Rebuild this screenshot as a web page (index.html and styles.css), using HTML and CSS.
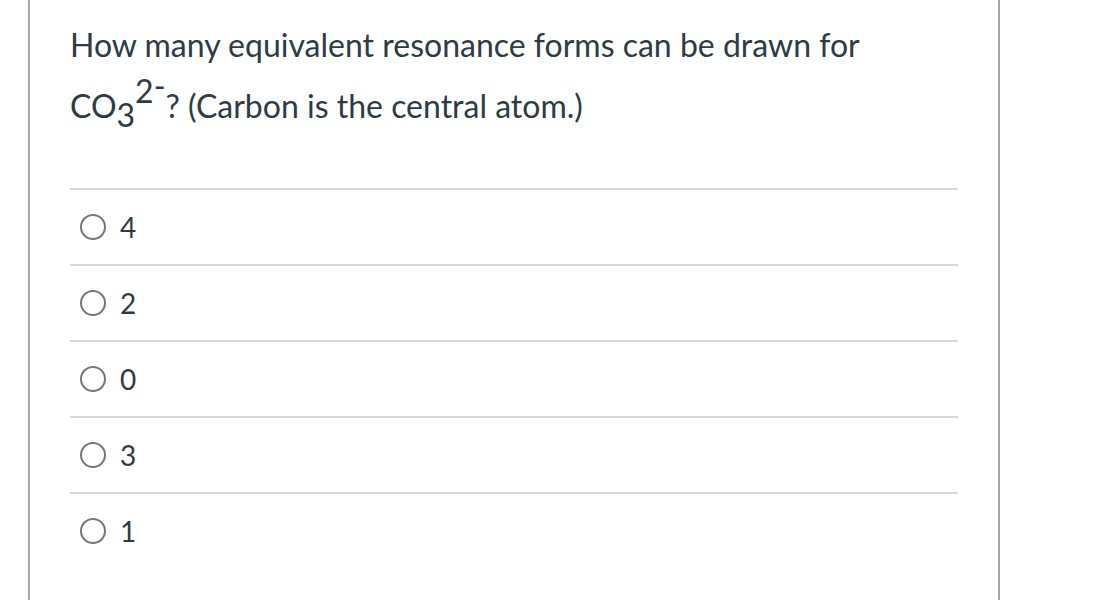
FILE: index.html
```html
<!DOCTYPE html>
<html>
<head>
<meta charset="utf-8">
<link rel="stylesheet" href="styles.css">
</head>
<body>
<div class="frame">
  <div class="question">
    <p class="qtext">How many equivalent resonance forms can be drawn for CO<sub>3</sub><sup>2<span class="minus">-</span></sup>? (Carbon is the central atom.)</p>
    <div class="answers">
      <label class="answer"><span class="radio"></span><span class="atext">4</span></label>
      <label class="answer"><span class="radio"></span><span class="atext">2</span></label>
      <label class="answer"><span class="radio"></span><span class="atext">0</span></label>
      <label class="answer"><span class="radio"></span><span class="atext">3</span></label>
      <label class="answer"><span class="radio"></span><span class="atext">1</span></label>
    </div>
  </div>
</div>
</body>
</html>
```
FILE: styles.css
```css
html, body {
  margin: 0;
  padding: 0;
  background: #fff;
  height: 100%;
}
body {
  font-family: Lato, "Noto Sans", sans-serif;
  color: #2d3b45;
}
.frame {
  margin-left: 28px;
  width: 968px;
  min-height: 600px;
  border-left: 2px solid #a5a5a5;
  border-right: 2px solid #a5a5a5;
}
.question {
  padding: 0 40px;
}
.qtext {
  margin: 0;
  padding: 14px 60px 52px 0;
  font-size: 32px;
  line-height: 61px;
}
.qtext sub {
  font-size: 32px;
  vertical-align: -9px;
  line-height: 0;
}
.qtext sup {
  font-size: 32px;
  vertical-align: 15px;
  line-height: 0;
}
.qtext .minus {
  display: inline-block;
  transform: translateY(-5px);
}
.answers {
  display: flex;
  flex-direction: column;
}
.answer {
  display: flex;
  align-items: center;
  height: 76px;
  border-top: 2px solid #dadada;
  box-sizing: border-box;
  padding-left: 10px;
  font-size: 28px;
}
.radio {
  width: 22px;
  height: 22px;
  border: 2px solid #777;
  border-radius: 50%;
  margin-right: 14px;
}
```
